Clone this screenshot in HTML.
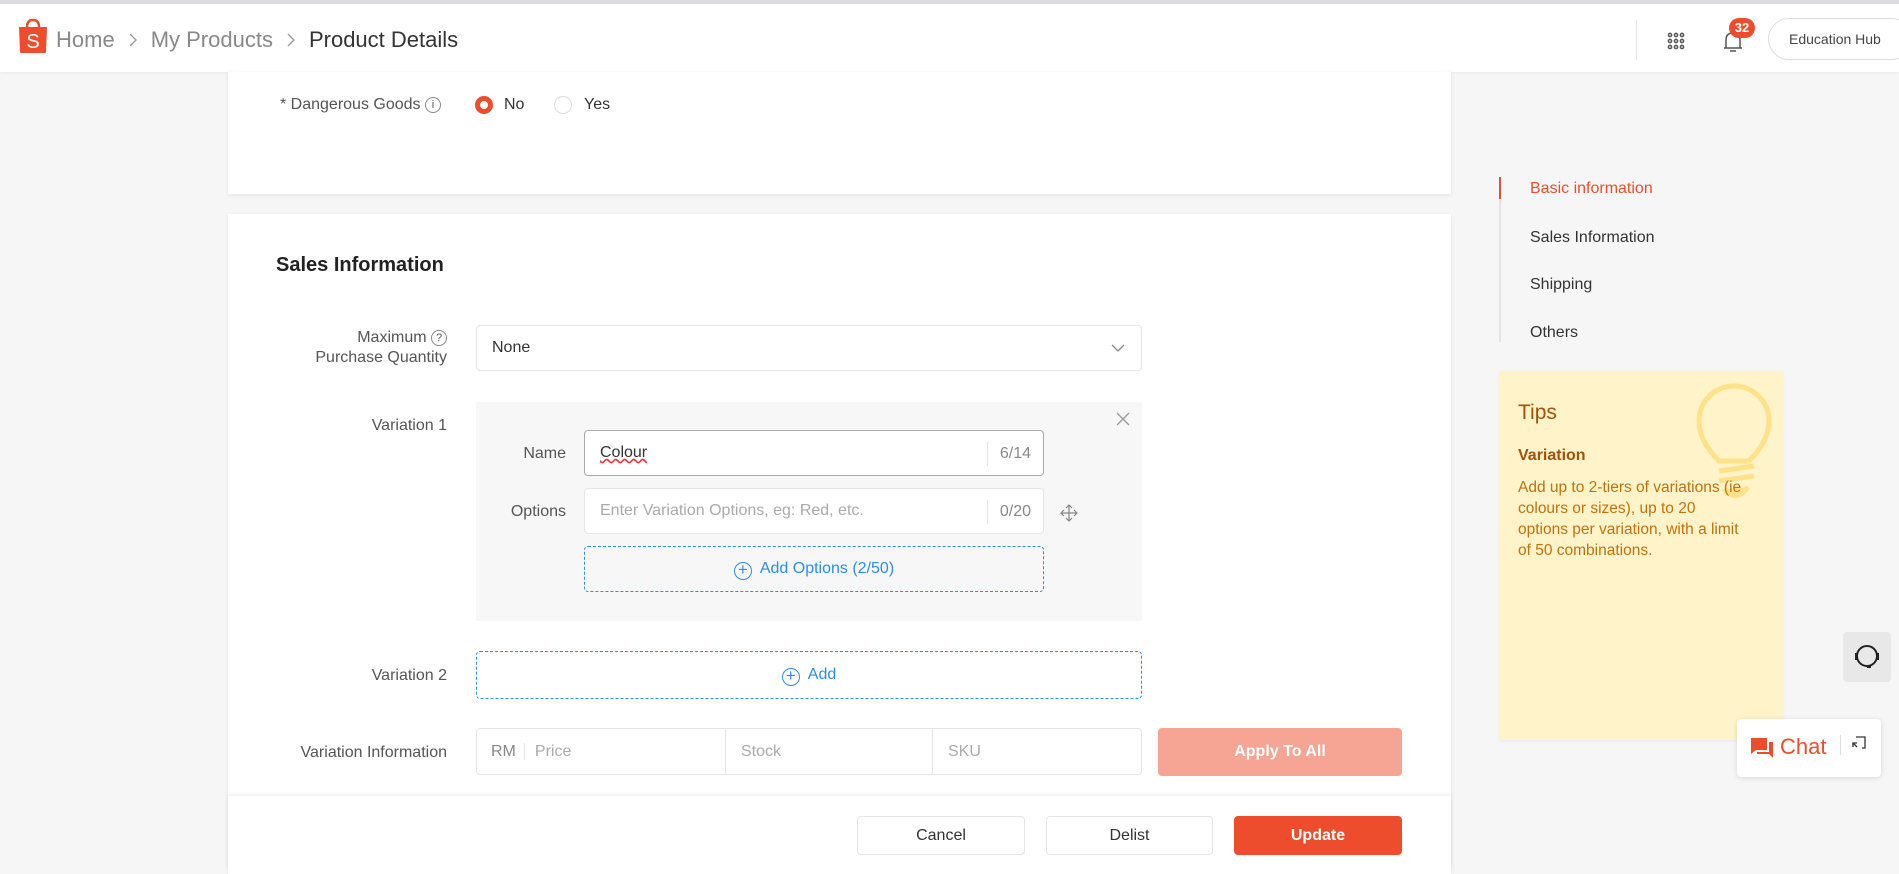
<!DOCTYPE html>
<html><head><meta charset="utf-8"><style>
*{box-sizing:border-box;margin:0;padding:0}
body{width:1899px;height:871px;overflow:hidden;background:#f6f6f6;font-family:"Liberation Sans",Arial,sans-serif;color:#333;position:relative}
.a{position:absolute}
.hdr{left:0;top:0;width:1899px;height:72px;background:#fff;border-top:4px solid #dcdce0;box-shadow:0 1px 3px rgba(0,0,0,.06)}
.card{background:#fff;box-shadow:0 1px 4px rgba(0,0,0,.08)}
.lbl{font-size:16px;color:#555;text-align:right}
.inp{border:1px solid #e5e5e5;border-radius:4px;background:#fff;font-size:16px}
.ph{color:#aaa}
.btn{border:1px solid #e5e5e5;border-radius:4px;background:#fff;font-size:16px;text-align:center;line-height:37px;color:#333}
.chev{display:inline-block;width:10px;height:14px;margin:0 13px;vertical-align:0}
</style></head><body>
<div class="a hdr">
  <svg class="a" style="left:18px;top:14px" width="30" height="36" viewBox="0 0 30 36"><path d="M9 9 Q9 2 15 2 Q21 2 21 9" fill="none" stroke="#ee4d2d" stroke-width="2.5"/><path d="M1 9 H29 L28 34 Q28 35 26 35 H4 Q2 35 2 34Z" fill="#ee4d2d"/><text x="15" y="30" fill="#fff" font-size="20" text-anchor="middle" font-family="Liberation Sans">S</text></svg>
  <div class="a" style="left:56px;top:23px;font-size:22px;color:#888;white-space:nowrap">Home<svg class="chev" viewBox="0 0 10 14" fill="none" stroke="#999" stroke-width="1.3"><path d="M2 1 L8 7 L2 13"/></svg>My Products<svg class="chev" viewBox="0 0 10 14" fill="none" stroke="#999" stroke-width="1.3"><path d="M2 1 L8 7 L2 13"/></svg><span style="color:#333">Product Details</span></div>
  <div class="a" style="left:1636px;top:16px;width:1px;height:40px;background:#e5e5e5"></div>
  <svg class="a" style="left:1666px;top:27px" width="20" height="20" viewBox="0 0 20 20" fill="none" stroke="#555" stroke-width="1.5"><circle cx="4" cy="4" r="1.6"/><circle cx="10" cy="4" r="1.6"/><circle cx="16" cy="4" r="1.6"/><circle cx="4" cy="10" r="1.6"/><circle cx="10" cy="10" r="1.6"/><circle cx="16" cy="10" r="1.6"/><circle cx="4" cy="16" r="1.6"/><circle cx="10" cy="16" r="1.6"/><circle cx="16" cy="16" r="1.6"/></svg>
  <svg class="a" style="left:1722px;top:26px" width="22" height="24" viewBox="0 0 22 24" fill="none" stroke="#555" stroke-width="1.5"><path d="M4 18 V10 Q4 3 11 3 Q18 3 18 10 V18 Z M2 18 H20 M8 21 H14"/></svg>
  <div class="a" style="left:1729px;top:14px;width:26px;height:20px;border-radius:10px;background:#ee4d2d;color:#fff;font-size:13px;font-weight:bold;text-align:center;line-height:20px">32</div>
  <div class="a" style="left:1768px;top:14px;width:145px;height:42px;border:1px solid #ddd;border-radius:21px;font-size:14px;color:#444;line-height:40px;padding-left:20px">Education Hub</div>
</div>

<div class="a card" style="left:228px;top:72px;width:1223px;height:122px">
  <div class="a" style="left:52px;top:24px;font-size:16px;color:#555;white-space:nowrap">* Dangerous Goods <span style="display:inline-block;width:16px;height:16px;border:1px solid #888;border-radius:50%;font-size:11px;text-align:center;line-height:14px;vertical-align:1px">i</span></div>
  <div class="a" style="left:247px;top:24px;width:18px;height:18px;border-radius:50%;border:5px solid #ee4d2d"></div>
  <div class="a" style="left:276px;top:24px;font-size:16px">No</div>
  <div class="a" style="left:326px;top:24px;width:18px;height:18px;border-radius:50%;border:1px solid #ddd"></div>
  <div class="a" style="left:356px;top:24px;font-size:16px">Yes</div>
</div>

<div class="a card" style="left:228px;top:214px;width:1223px;height:660px">
  <div class="a" style="left:48px;top:40px;font-size:20px;font-weight:bold;color:#222">Sales Information</div>
  <div class="a lbl" style="left:0;top:114px;width:219px;line-height:20px">Maximum <span style="display:inline-block;width:16px;height:16px;border:1px solid #888;border-radius:50%;font-size:11px;text-align:center;line-height:14px;vertical-align:1px">?</span><br>Purchase Quantity</div>
  <div class="a inp" style="left:248px;top:111px;width:666px;height:46px;padding:13px 15px;color:#333">None<svg style="position:absolute;right:16px;top:18px" width="14" height="9" viewBox="0 0 14 9" fill="none" stroke="#888" stroke-width="1.3"><path d="M1 1 L7 7 L13 1"/></svg></div>
  <div class="a lbl" style="left:0;top:203px;width:219px">Variation 1</div>
  <div class="a" style="left:248px;top:188px;width:666px;height:219px;background:#f7f7f7"></div>
  <svg class="a" style="left:888px;top:198px" width="14" height="14" viewBox="0 0 14 14" stroke="#999" stroke-width="1.3"><path d="M1 1 L13 13 M13 1 L1 13"/></svg>
  <div class="a lbl" style="left:248px;top:231px;width:90px">Name</div>
  <div class="a inp" style="left:356px;top:216px;width:460px;height:46px;border-color:#aaa;padding:13px 15px;color:#333"><span style="text-decoration:underline wavy #e33">Colour</span><span style="position:absolute;right:0;top:11px;border-left:1px solid #e5e5e5;padding:0 12px;color:#888;line-height:24px">6/14</span></div>
  <div class="a lbl" style="left:248px;top:289px;width:90px">Options</div>
  <div class="a inp" style="left:356px;top:274px;width:460px;height:46px;padding:13px 15px"><span class="ph">Enter Variation Options, eg: Red, etc.</span><span style="position:absolute;right:0;top:11px;border-left:1px solid #e5e5e5;padding:0 12px;color:#888;line-height:24px">0/20</span></div>
  <svg class="a" style="left:832px;top:290px" width="18" height="18" viewBox="0 0 18 18" fill="none" stroke="#888" stroke-width="1.2"><path d="M9 1 V17 M1 9 H17 M6 4 L9 1 L12 4 M6 14 L9 17 L12 14 M4 6 L1 9 L4 12 M14 6 L17 9 L14 12"/></svg>
  <div class="a" style="left:356px;top:332px;width:460px;height:46px;border:1px dashed #2d8cf0;border-radius:4px;color:#2d8cf0;font-size:16px;text-align:center;line-height:44px"><span style="display:inline-block;width:18px;height:18px;border:1.5px solid #2d8cf0;border-radius:50%;line-height:14px;font-size:17px;vertical-align:-2px;margin-right:8px">+</span>Add Options (2/50)</div>
  <div class="a lbl" style="left:0;top:453px;width:219px">Variation 2</div>
  <div class="a" style="left:248px;top:437px;width:666px;height:48px;border:1px dashed #2d8cf0;border-radius:4px;color:#2d8cf0;font-size:16px;text-align:center;line-height:46px"><span style="display:inline-block;width:18px;height:18px;border:1.5px solid #2d8cf0;border-radius:50%;line-height:14px;font-size:17px;vertical-align:-2px;margin-right:8px">+</span>Add</div>
  <div class="a lbl" style="left:0;top:530px;width:219px">Variation Information</div>
  <div class="a inp" style="left:248px;top:514px;width:666px;height:47px;display:flex;line-height:45px">
    <div style="width:249px;border-right:1px solid #e5e5e5;padding-left:14px"><span style="color:#888">RM</span><span style="border-left:1px solid #e5e5e5;margin-left:8px;padding-left:10px" class="ph">Price</span></div>
    <div style="width:207px;border-right:1px solid #e5e5e5;padding-left:15px" class="ph">Stock</div>
    <div style="padding-left:15px" class="ph">SKU</div>
  </div>
  <div class="a" style="left:930px;top:514px;width:244px;height:48px;background:#f6a493;border-radius:4px;color:#fff;font-size:16px;font-weight:bold;text-align:center;line-height:48px">Apply To All</div>
</div>

<div class="a" style="left:228px;top:796px;width:1223px;height:75px;background:#fff;box-shadow:0 -2px 4px rgba(0,0,0,.06)">
  <div class="a btn" style="left:629px;top:20px;width:168px;height:39px">Cancel</div>
  <div class="a btn" style="left:818px;top:20px;width:167px;height:39px">Delist</div>
  <div class="a btn" style="left:1006px;top:20px;width:168px;height:39px;background:#ee4d2d;border-color:#ee4d2d;color:#fff;font-weight:bold">Update</div>
</div>

<div class="a" style="left:1499px;top:177px;width:2px;height:165px;background:#e5e5e5"></div>
<div class="a" style="left:1499px;top:177px;width:2px;height:22px;background:#ee4d2d"></div>
<div class="a" style="left:1530px;top:180px;font-size:16px;color:#ee4d2d">Basic information</div>
<div class="a" style="left:1530px;top:229px;font-size:16px;color:#333">Sales Information</div>
<div class="a" style="left:1530px;top:276px;font-size:16px;color:#333">Shipping</div>
<div class="a" style="left:1530px;top:324px;font-size:16px;color:#333">Others</div>

<div class="a" style="left:1499px;top:371px;width:284px;height:369px;background:#fff3c9;box-shadow:0 1px 3px rgba(0,0,0,.06)">
  <svg class="a" style="left:195px;top:10px" width="80" height="130" viewBox="0 0 80 130" fill="none" stroke="#fde28a" stroke-width="5"><path d="M25 80 Q5 60 5 40 A35 35 0 0 1 75 40 Q75 60 55 80 Z"/><path d="M25 90 L60 85 M25 100 L60 95"/><path d="M30 108 Q42 122 54 106" fill="#fde28a"/></svg>
  <div class="a" style="left:19px;top:30px;font-size:21px;color:#a4510a">Tips</div>
  <div class="a" style="left:19px;top:76px;font-size:16px;font-weight:bold;color:#a4510a">Variation</div>
  <div class="a" style="left:19px;top:106px;width:226px;font-size:15.5px;line-height:21px;color:#c0730d">Add up to 2-tiers of variations (ie colours or sizes), up to 20 options per variation, with a limit of 50 combinations.</div>
</div>

<div class="a" style="left:1843px;top:632px;width:48px;height:50px;background:#e8e8e8;border-radius:4px"><svg style="position:absolute;left:9px;top:10px" width="30" height="30" viewBox="0 0 30 30" fill="none" stroke="#222" stroke-width="2"><circle cx="15" cy="14" r="10"/><path d="M4 11 V18 M26 11 V18 M15 25 H19"/></svg></div>

<div class="a" style="left:1737px;top:719px;width:144px;height:58px;background:#fff;border-radius:4px;box-shadow:0 1px 6px rgba(0,0,0,.12)">
  <svg class="a" style="left:13px;top:18px" width="24" height="22" viewBox="0 0 24 22"><path d="M1 1 H17 V13 H6 L1 17Z" fill="#ee4d2d"/><path d="M19 5 H23 V21 L19 17 H7 V15 H19Z" fill="#ee4d2d"/></svg>
  <div class="a" style="left:43px;top:15px;font-size:22px;color:#ee4d2d">Chat</div>
  <div class="a" style="left:103px;top:16px;width:1px;height:20px;background:#ddd"></div>
  <svg class="a" style="left:113px;top:17px" width="16" height="16" viewBox="0 0 16 16" fill="none" stroke="#333" stroke-width="1.3"><path d="M6 1 H15 V12 H12 M3 7 L7 11 M3 11 V7 H7"/></svg>
</div>
</body></html>
